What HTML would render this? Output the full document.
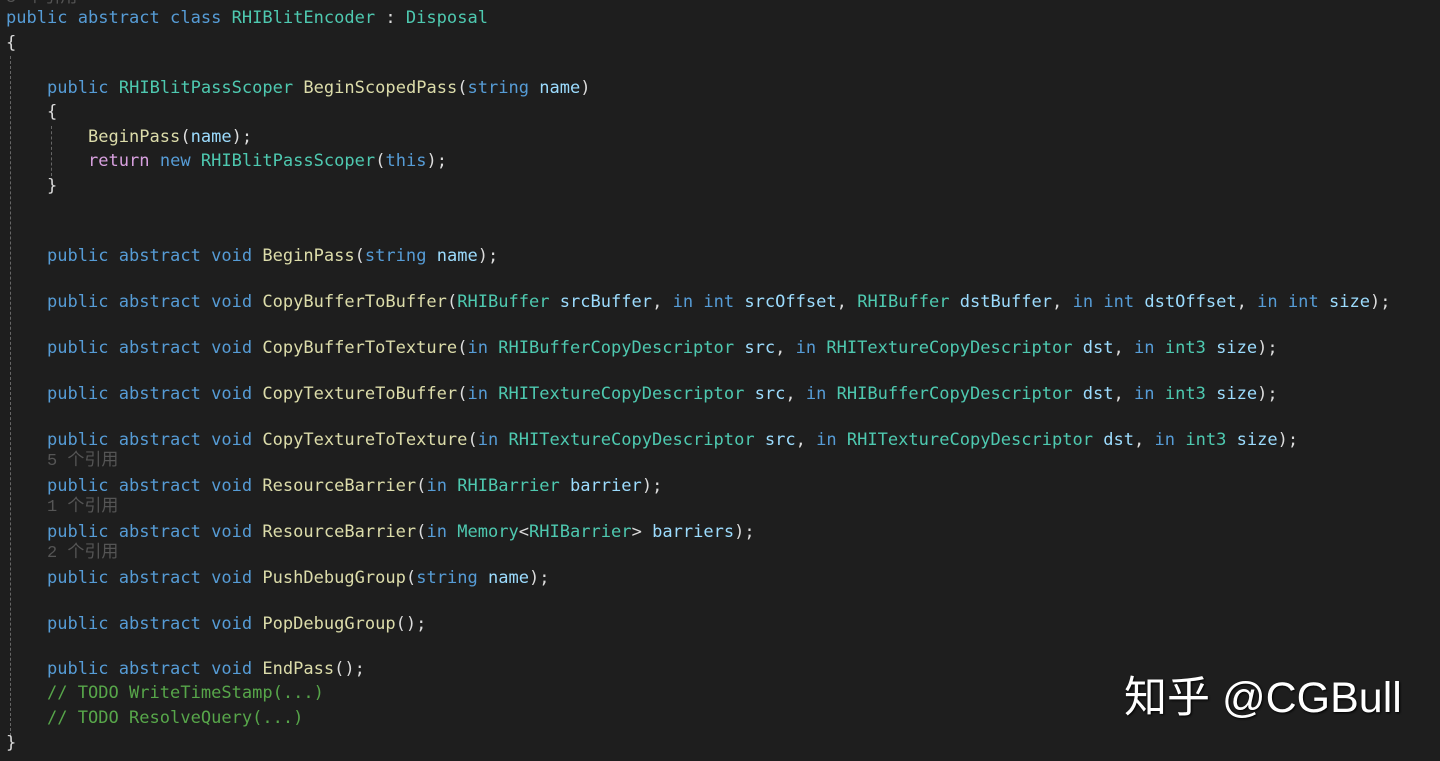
<!DOCTYPE html>
<html><head><meta charset="utf-8"><style>
html,body{margin:0;padding:0;background:#1e1e1e;width:1440px;height:761px;overflow:hidden;position:relative}
.l{position:absolute;left:6px;height:24px;line-height:24px;white-space:pre;font-family:"DejaVu Sans Mono","Liberation Mono","Noto Sans CJK SC",monospace;font-size:17.05px;color:#dcdcdc}
.k{color:#569cd6}.t{color:#4ec9b0}.m{color:#dcdcaa}.p{color:#9cdcfe}.c{color:#d8a0df}.g{color:#57a64a}
.r{color:#555;font-size:17px;left:47px;font-family:"Liberation Mono","Noto Sans CJK SC",monospace}
.guide{position:absolute;width:0;border-left:1px dashed #666}
.wm{position:absolute;left:1124px;top:670px;font-family:"Liberation Sans","Noto Sans CJK SC",sans-serif;font-size:43px;color:#fff;line-height:56px;white-space:pre;text-shadow:1px 1px 2px #000}
</style></head><body>
<div class="l r" style="top:-13px;left:6px">5 个引用</div>
<div class="l" style="top:6px"><span class="k">public abstract class</span> <span class="t">RHIBlitEncoder</span> : <span class="t">Disposal</span></div>
<div class="l" style="top:31px">{</div>
<div class="guide" style="left:10px;top:56px;height:680px"></div>
<div class="guide" style="left:51px;top:126px;height:50px"></div>
<div class="l" style="top:76px">    <span class="k">public</span> <span class="t">RHIBlitPassScoper</span> <span class="m">BeginScopedPass</span>(<span class="k">string</span> <span class="p">name</span>)</div>
<div class="l" style="top:100px">    {</div>
<div class="l" style="top:125px">        <span class="m">BeginPass</span>(<span class="p">name</span>);</div>
<div class="l" style="top:149px">        <span class="c">return</span> <span class="k">new</span> <span class="t">RHIBlitPassScoper</span>(<span class="k">this</span>);</div>
<div class="l" style="top:174px">    }</div>
<div class="l" style="top:244px">    <span class="k">public abstract void</span> <span class="m">BeginPass</span>(<span class="k">string</span> <span class="p">name</span>);</div>
<div class="l" style="top:290px">    <span class="k">public abstract void</span> <span class="m">CopyBufferToBuffer</span>(<span class="t">RHIBuffer</span> <span class="p">srcBuffer</span>, <span class="k">in int</span> <span class="p">srcOffset</span>, <span class="t">RHIBuffer</span> <span class="p">dstBuffer</span>, <span class="k">in int</span> <span class="p">dstOffset</span>, <span class="k">in int</span> <span class="p">size</span>);</div>
<div class="l" style="top:336px">    <span class="k">public abstract void</span> <span class="m">CopyBufferToTexture</span>(<span class="k">in</span> <span class="t">RHIBufferCopyDescriptor</span> <span class="p">src</span>, <span class="k">in</span> <span class="t">RHITextureCopyDescriptor</span> <span class="p">dst</span>, <span class="k">in</span> <span class="t">int3</span> <span class="p">size</span>);</div>
<div class="l" style="top:382px">    <span class="k">public abstract void</span> <span class="m">CopyTextureToBuffer</span>(<span class="k">in</span> <span class="t">RHITextureCopyDescriptor</span> <span class="p">src</span>, <span class="k">in</span> <span class="t">RHIBufferCopyDescriptor</span> <span class="p">dst</span>, <span class="k">in</span> <span class="t">int3</span> <span class="p">size</span>);</div>
<div class="l" style="top:428px">    <span class="k">public abstract void</span> <span class="m">CopyTextureToTexture</span>(<span class="k">in</span> <span class="t">RHITextureCopyDescriptor</span> <span class="p">src</span>, <span class="k">in</span> <span class="t">RHITextureCopyDescriptor</span> <span class="p">dst</span>, <span class="k">in</span> <span class="t">int3</span> <span class="p">size</span>);</div>
<div class="l r" style="top:450px">5 个引用</div>
<div class="l" style="top:474px">    <span class="k">public abstract void</span> <span class="m">ResourceBarrier</span>(<span class="k">in</span> <span class="t">RHIBarrier</span> <span class="p">barrier</span>);</div>
<div class="l r" style="top:496px">1 个引用</div>
<div class="l" style="top:520px">    <span class="k">public abstract void</span> <span class="m">ResourceBarrier</span>(<span class="k">in</span> <span class="t">Memory</span>&lt;<span class="t">RHIBarrier</span>&gt; <span class="p">barriers</span>);</div>
<div class="l r" style="top:542px">2 个引用</div>
<div class="l" style="top:566px">    <span class="k">public abstract void</span> <span class="m">PushDebugGroup</span>(<span class="k">string</span> <span class="p">name</span>);</div>
<div class="l" style="top:612px">    <span class="k">public abstract void</span> <span class="m">PopDebugGroup</span>();</div>
<div class="l" style="top:657px">    <span class="k">public abstract void</span> <span class="m">EndPass</span>();</div>
<div class="l g" style="top:681px">    // TODO WriteTimeStamp(...)</div>
<div class="l g" style="top:706px">    // TODO ResolveQuery(...)</div>
<div class="l" style="top:731px">}</div>
<div class="wm">知乎 @CGBull</div>
</body></html>
